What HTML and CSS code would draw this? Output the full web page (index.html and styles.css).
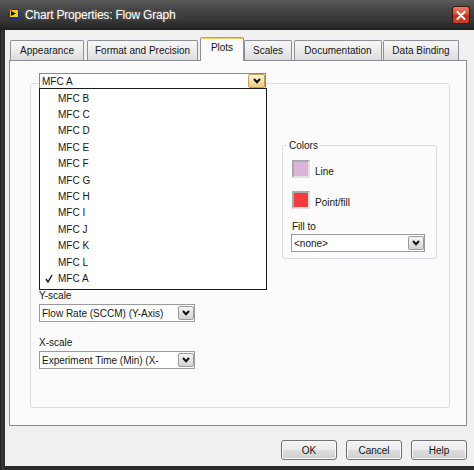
FILE: index.html
```html
<!DOCTYPE html>
<html>
<head>
<meta charset="utf-8">
<title>Chart Properties: Flow Graph</title>
<link rel="stylesheet" href="styles.css">
</head>
<body>
<div class="window">
  <div class="titlebar">
    <svg class="app-icon" width="10" height="10" viewBox="0 0 10 10">
      <rect width="10" height="10" fill="#1b2f8f"/>
      <rect x="1" y="1" width="8" height="7" fill="#f2d21c"/>
      <path d="M2 2 L7 4.5 L2 7 Z" fill="#111"/>
      <rect x="0" y="0" width="3" height="2" fill="#d43b2a"/>
    </svg>
    <span class="title">Chart Properties: Flow Graph</span>
    <div class="close-btn">
      <svg width="10" height="9" viewBox="0 0 10 9"><path d="M1.5 1 L8.5 8 M8.5 1 L1.5 8" stroke="#fff" stroke-width="2" stroke-linecap="round"/></svg>
    </div>
  </div>
  <div class="client">
    <div class="tabs">
      <div class="tab tab-appearance">Appearance</div>
      <div class="tab tab-format">Format and Precision</div>
      <div class="tab tab-plots active">Plots</div>
      <div class="tab tab-scales">Scales</div>
      <div class="tab tab-doc">Documentation</div>
      <div class="tab tab-binding">Data Binding</div>
    </div>
    <div class="panel">
      <fieldset class="plot-group">
        <legend class="plot-legend">
          <div class="combo combo-plot">
            <span class="combo-text">MFC A</span>
            <span class="combo-btn hot"><svg width="8" height="6" viewBox="0 0 8 6"><path d="M1 1 L4 4.2 L7 1" fill="none" stroke="#111" stroke-width="2"/></svg></span>
          </div>
        </legend>
        <div class="plot-body">
          <div class="left-col">
            <div class="field-label">Y-scale</div>
            <div class="combo combo-scale">
              <span class="combo-text">Flow Rate (SCCM) (Y-Axis)</span>
              <span class="combo-btn"><svg width="8" height="6" viewBox="0 0 8 6"><path d="M1 1 L4 4.2 L7 1" fill="none" stroke="#111" stroke-width="2"/></svg></span>
            </div>
            <div class="field-label xscale-label">X-scale</div>
            <div class="combo combo-scale">
              <span class="combo-text">Experiment Time (Min) (X-<br>Axis)</span>
              <span class="combo-btn"><svg width="8" height="6" viewBox="0 0 8 6"><path d="M1 1 L4 4.2 L7 1" fill="none" stroke="#111" stroke-width="2"/></svg></span>
            </div>
          </div>
          <fieldset class="colors-group">
            <legend class="colors-legend">Colors</legend>
            <div class="swatch-row first">
              <span class="swatch swatch-line"></span>
              <span class="swatch-label">Line</span>
            </div>
            <div class="swatch-row second">
              <span class="swatch swatch-point"></span>
              <span class="swatch-label">Point/fill</span>
            </div>
            <div class="field-label fill-label">Fill to</div>
            <div class="combo combo-fill">
              <span class="combo-text">&lt;none&gt;</span>
              <span class="combo-btn"><svg width="8" height="6" viewBox="0 0 8 6"><path d="M1 1 L4 4.2 L7 1" fill="none" stroke="#111" stroke-width="2"/></svg></span>
            </div>
          </fieldset>
        </div>
      </fieldset>
      <ul class="dropdown-list">
        <li><span class="check-cell"></span>MFC B</li>
        <li><span class="check-cell"></span>MFC C</li>
        <li><span class="check-cell"></span>MFC D</li>
        <li><span class="check-cell"></span>MFC E</li>
        <li><span class="check-cell"></span>MFC F</li>
        <li><span class="check-cell"></span>MFC G</li>
        <li><span class="check-cell"></span>MFC H</li>
        <li><span class="check-cell"></span>MFC I</li>
        <li><span class="check-cell"></span>MFC J</li>
        <li><span class="check-cell"></span>MFC K</li>
        <li><span class="check-cell"></span>MFC L</li>
        <li><span class="check-cell"><svg width="8" height="9" viewBox="0 0 8 9"><path d="M1 5 L3 8 L7 1" fill="none" stroke="#111" stroke-width="1.4"/></svg></span>MFC A</li>
      </ul>
    </div>
    <div class="buttons">
      <div class="btn">OK</div>
      <div class="btn">Cancel</div>
      <div class="btn">Help</div>
    </div>
  </div>
</div>
</body>
</html>
```
FILE: styles.css
```css
html, body {
  margin: 0;
  padding: 0;
}
body {
  background: #262626;
  font-family: "Liberation Sans", Arial, sans-serif;
  font-size: 10px;
  color: #151515;
}
.window {
  width: 474px;
  height: 470px;
  display: flex;
  flex-direction: column;
  background: linear-gradient(to right, #1a1a1a 0, #3a3a3a 2px, #2b2b2b 5px);
  overflow: hidden;
}
.titlebar {
  flex: none;
  height: 30px;
  display: flex;
  align-items: center;
  padding-left: 9px;
  background: linear-gradient(#5c5c5c 0, #454545 30%, #363636 70%, #1e1e1e 100%);
  color: #fff;
}
.app-icon {
  flex: none;
  margin-right: 6px;
  margin-bottom: 2px;
}
.title {
  font-size: 12px;
  letter-spacing: -0.2px;
  text-shadow: 0 0 3px rgba(255, 255, 255, 0.35);
}
.close-btn {
  margin-left: auto;
  margin-right: 4px;
  width: 18px;
  height: 18px;
  box-sizing: border-box;
  border: 1px solid #4a1208;
  border-radius: 3px;
  background: linear-gradient(#e8806b 0, #d24f36 45%, #bf301a 55%, #c9452a 100%);
  display: flex;
  align-items: center;
  justify-content: center;
}
.client {
  flex: 1;
  margin: 0 0 4px 5px;
  background: #f0f0f0;
  display: flex;
  flex-direction: column;
  padding-top: 7px;
}
.tabs {
  display: flex;
  align-items: flex-start;
  height: 23px;
  padding-left: 5px;
  position: relative;
  z-index: 1;
}
.tab {
  height: 20px;
  margin-top: 3px;
  box-sizing: border-box;
  border: 1px solid #8d9097;
  border-bottom: none;
  border-radius: 2px 2px 0 0;
  background: linear-gradient(#f8f8f8 0, #ececec 50%, #dcdcdc 100%);
  display: flex;
  align-items: center;
  justify-content: center;
  line-height: 12px;
  white-space: nowrap;
}
.tab.active {
  height: 24px;
  margin-top: 0;
  background: #fbfbfb;
  border-top: 1px solid #e39a26;
  box-shadow: inset 0 1px 0 #f7c463;
  align-items: flex-start;
  padding-top: 4px;
}
.tab-appearance { width: 74px; margin-right: 3px; }
.tab-format { width: 111px; margin-right: 2px; }
.tab-plots { width: 44px; }
.tab-scales { width: 48px; margin-right: 2px; }
.tab-doc { width: 88px; margin-right: 1px; }
.tab-binding { width: 76px; }

.panel {
  margin-left: 4px;
  width: 458px;
  height: 366px;
  box-sizing: border-box;
  border: 1px solid #898c95;
  background: #fbfbfb;
  position: relative;
  padding: 12px 16px 0 20px;
}
.plot-group {
  margin: 0;
  padding: 0 8px;
  width: 420px;
  min-width: 0;
  box-sizing: border-box;
  border: 1px solid #d5dde3;
  border-radius: 3px;
}
.plot-legend {
  padding: 0 0 4px 0;
}
.plot-body {
  display: grid;
  grid-template-columns: 243px 155px;
  height: 314px;
}
.combo {
  display: flex;
  box-sizing: border-box;
  background: #fff;
  border: 1px solid #9b9b9b;
}
.combo-text {
  flex: 1;
  min-width: 0;
  overflow: hidden;
  padding-left: 2px;
  line-height: 13px;
  padding-top: 2px;
  white-space: nowrap;
}
.combo-btn {
  flex: none;
  width: 16px;
  margin: 1px 0;
  box-sizing: border-box;
  border: 1px solid #9c9c9c;
  border-radius: 2px;
  background: linear-gradient(#f5f5f5 0, #e4e4e4 50%, #d2d2d2 100%);
  display: flex;
  align-items: center;
  justify-content: center;
}
.combo-plot {
  width: 227px;
  height: 16px;
  border-color: #8a8a8a;
}
.combo-plot .combo-text {
  padding-top: 1px;
  padding-left: 2px;
}
.combo-btn.hot {
  width: 17px;
  margin: 0;
  border-color: #c29f5f;
  background: linear-gradient(#fdf3da 0, #f7e0ab 50%, #eecb83 100%);
}
.left-col {
  display: flex;
  flex-direction: column;
  padding-top: 196px;
}
.field-label {
  line-height: 13px;
  margin-bottom: 2px;
}
.combo-scale {
  width: 156px;
  height: 18px;
}
.xscale-label {
  margin-top: 14px;
}
.colors-group {
  align-self: start;
  margin: 46px 0 0 0;
  padding: 0 8px 6px 9px;
  width: 155px;
  min-width: 0;
  box-sizing: border-box;
  border: 1px solid #d5dde3;
  border-radius: 3px;
}
.colors-legend {
  padding: 0 2px;
  margin-left: -5px;
  line-height: 13px;
}
.swatch-row {
  display: flex;
  align-items: center;
  gap: 5px;
}
.swatch-row.first { margin-top: 8px; }
.swatch-row.second { margin-top: 13px; }
.swatch {
  width: 18px;
  height: 18px;
  box-sizing: border-box;
  border: 2px solid;
  border-color: #a9a9a9 #e2e2e2 #e2e2e2 #a9a9a9;
}
.swatch-line { background: #dbb5d9; }
.swatch-point { background: #f63c3c; }
.swatch-label {
  line-height: 13px;
  padding-top: 4px;
}
.fill-label {
  margin-top: 11px;
  margin-bottom: 1px;
}
.combo-fill {
  width: 134px;
  height: 18px;
  margin-left: -1px;
}
.dropdown-list {
  position: absolute;
  left: 29px;
  top: 27px;
  z-index: 2;
  width: 228px;
  height: 202px;
  box-sizing: border-box;
  margin: 0;
  padding: 1px 0 0 0;
  list-style: none;
  background: #fff;
  border: 1px solid #1a1a1a;
}
.dropdown-list li {
  height: 16.4px;
  display: flex;
  align-items: center;
  line-height: 13px;
}
.check-cell {
  width: 18px;
  flex: none;
  display: flex;
  justify-content: center;
}
.buttons {
  display: flex;
  justify-content: flex-end;
  gap: 9px;
  margin-top: 14px;
  padding-right: 7px;
}
.btn {
  width: 56px;
  height: 20px;
  box-sizing: border-box;
  border: 1px solid #707070;
  border-radius: 3px;
  background: linear-gradient(#f3f3f3 0, #ebebeb 50%, #dddddd 50%, #cfcfcf 100%);
  box-shadow: inset 0 0 0 1px #fafafa;
  display: flex;
  align-items: center;
  justify-content: center;
}
```
